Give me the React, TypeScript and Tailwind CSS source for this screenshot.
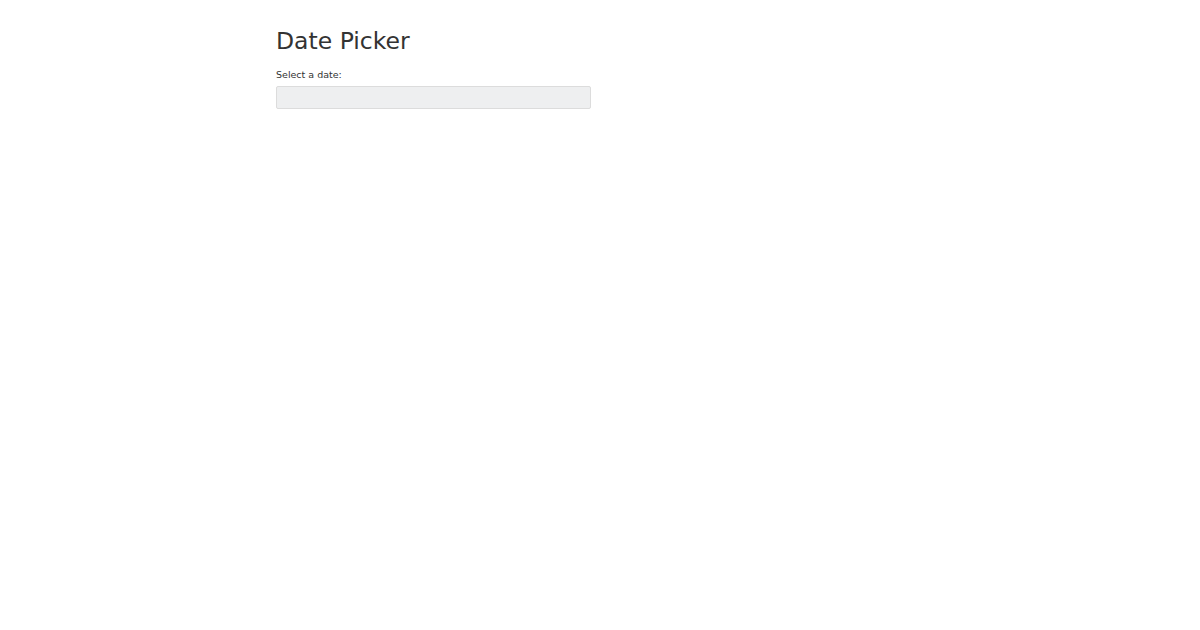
export default function App() {
  return (
    <div className="min-h-screen bg-white font-['DejaVu_Sans',sans-serif] text-[#333]">
      <div className="mx-auto max-w-2xl px-3 pt-[25px]">
        <h1 className="text-[23.5px] leading-[32px] text-[#333]">Date Picker</h1>
        <label className="mt-[11px] block text-[9.5px] leading-[13px] text-[#333]">Select a date:</label>
        <div className="mt-[5px] h-[23px] w-[315px] rounded-[2px] border border-[#dcdcdc] bg-[#eeeff0]" />
      </div>
    </div>
  );
}
